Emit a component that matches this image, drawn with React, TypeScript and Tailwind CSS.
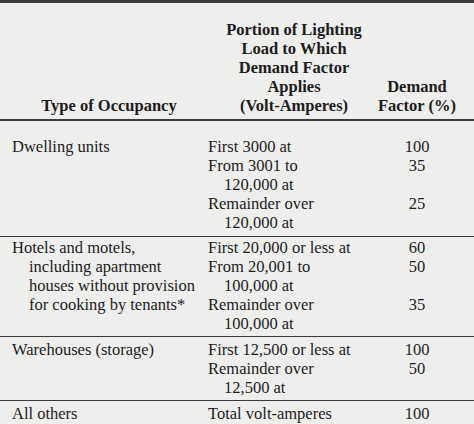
type Line = { text: string; indent?: boolean };

interface Row {
  occupancy: Line[];
  load: Line[];
  factor: string[];
  pad: string;
}

// Demand factors table, as printed in the handbook scan
const rows: Row[] = [
  {
    occupancy: [{ text: 'Dwelling units' }],
    load: [
      { text: 'First 3000 at' },
      { text: 'From 3001 to' },
      { text: '120,000 at', indent: true },
      { text: 'Remainder over' },
      { text: '120,000 at', indent: true },
    ],
    factor: ['100', '35', '', '25', ''],
    pad: 'pt-[16px] pb-[3.5px]',
  },
  {
    occupancy: [
      { text: 'Hotels and motels,' },
      { text: 'including apartment', indent: true },
      { text: 'houses without provision', indent: true },
      { text: 'for cooking by tenants*', indent: true },
    ],
    load: [
      { text: 'First 20,000 or less at' },
      { text: 'From 20,001 to' },
      { text: '100,000 at', indent: true },
      { text: 'Remainder over' },
      { text: '100,000 at', indent: true },
    ],
    factor: ['60', '50', '', '35', ''],
    pad: 'pt-[1.5px] pb-[3px]',
  },
  {
    occupancy: [{ text: 'Warehouses (storage)' }],
    load: [
      { text: 'First 12,500 or less at' },
      { text: 'Remainder over' },
      { text: '12,500 at', indent: true },
    ],
    factor: ['100', '50', ''],
    pad: 'pt-[2.5px] pb-[3.5px]',
  },
  {
    occupancy: [{ text: 'All others' }],
    load: [{ text: 'Total volt-amperes' }],
    factor: ['100'],
    pad: 'pt-[3px] pb-[4px]',
  },
];

function Lines({ lines, indentClass }: { lines: Line[]; indentClass: string }) {
  return (
    <div className="flex flex-col">
      {lines.map((l, i) => (
        <span key={i} className={`whitespace-nowrap ${l.indent ? indentClass : ''}`}>
          {l.text}
        </span>
      ))}
    </div>
  );
}

export default function App() {
  return (
    <div
      className="w-[474px] h-[424px] overflow-hidden bg-[#eeeeec] text-[#1c1c1c] text-[16.5px] leading-[19px]"
      style={{ fontFamily: '"Liberation Serif", "Times New Roman", serif' }}
    >
      {/* Header */}
      <div className="grid grid-cols-[208px_164px_102px] items-end border-t-[3px] border-b-[2px] border-[#3a3a3a] pt-[17px] pb-[4px] font-bold">
        <div className="text-center pl-[10px]">Type of Occupancy</div>
        <div className="flex flex-col items-center pl-[8px] whitespace-nowrap">
          <span>Portion of Lighting</span>
          <span>Load to Which</span>
          <span>Demand Factor</span>
          <span>Applies</span>
          <span>(Volt-Amperes)</span>
        </div>
        <div className="flex flex-col items-center pr-[12px]">
          <span>Demand</span>
          <span>Factor (%)</span>
        </div>
      </div>

      {/* Body rows */}
      {rows.map((row, i) => (
        <div
          key={i}
          className={`grid grid-cols-[208px_164px_102px] items-start ${row.pad} ${
            i < rows.length - 1 ? 'border-b-[1.5px] border-[#3a3a3a]' : ''
          }`}
        >
          <div className="pl-[12px]">
            <Lines lines={row.occupancy} indentClass="pl-[17px]" />
          </div>
          <div>
            <Lines lines={row.load} indentClass="pl-[16px]" />
          </div>
          <div className="flex flex-col items-center pr-[12px]">
            {row.factor.map((f, j) => (
              <span key={j}>{f || '\u00a0'}</span>
            ))}
          </div>
        </div>
      ))}
    </div>
  );
}
